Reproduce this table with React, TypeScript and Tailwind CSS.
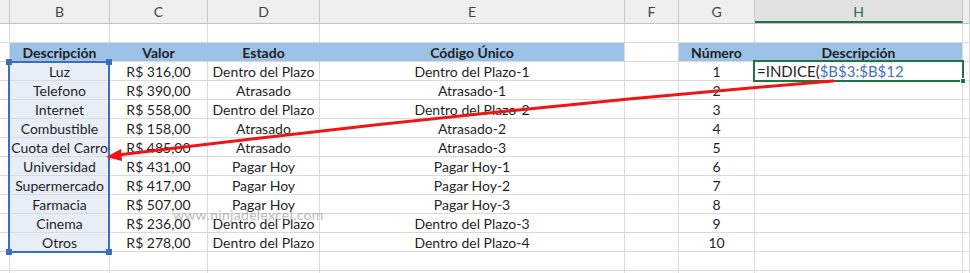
import React from "react";

const colWidths = ["w-[10px]", "w-[100px]", "w-[98px]", "w-[112px]", "w-[305px]", "w-[54px]", "w-[76px]", "w-[208px]", "w-[7px]"];
const letters = ["", "B", "C", "D", "E", "F", "G", "H", ""];

const rows = [
  ["Luz", "R$ 316,00", "Dentro del Plazo", "Dentro del Plazo-1", "1"],
  ["Telefono", "R$ 390,00", "Atrasado", "Atrasado-1", "2"],
  ["Internet", "R$ 558,00", "Dentro del Plazo", "Dentro del Plazo-2", "3"],
  ["Combustible", "R$ 158,00", "Atrasado", "Atrasado-2", "4"],
  ["Cuota del Carro", "R$ 485,00", "Atrasado", "Atrasado-3", "5"],
  ["Universidad", "R$ 431,00", "Pagar Hoy", "Pagar Hoy-1", "6"],
  ["Supermercado", "R$ 417,00", "Pagar Hoy", "Pagar Hoy-2", "7"],
  ["Farmacia", "R$ 507,00", "Pagar Hoy", "Pagar Hoy-3", "8"],
  ["Cinema", "R$ 236,00", "Dentro del Plazo", "Dentro del Plazo-3", "9"],
  ["Otros", "R$ 278,00", "Dentro del Plazo", "Dentro del Plazo-4", "10"],
];

const cell = "h-[19px] shrink-0 border-r border-b border-[#dadada] text-center leading-[19px] whitespace-nowrap";

function Cell({ i, className = "", children }: { i: number; className?: string; children?: React.ReactNode }) {
  return <div className={`${cell} ${colWidths[i]} ${className}`}>{children}</div>;
}

function EmptyRow() {
  return (
    <div className="flex">
      {colWidths.map((_, i) => (
        <Cell key={i} i={i} />
      ))}
    </div>
  );
}

export default function App() {
  return (
    <div className="relative h-[273px] w-[970px] overflow-hidden bg-white text-[14px] text-[#1f1f1f]" style={{ fontFamily: "Lato, 'Open Sans', sans-serif" }}>
      {/* column letters */}
      <div className="flex h-[24px] border-b border-[#c4c4c4] bg-[#efefef]">
        {colWidths.map((w, i) => (
          <div
            key={i}
            className={`${w} shrink-0 border-r border-[#c8c8c8] text-center leading-[23px] ${
              letters[i] === "H" ? "border-b-2 border-b-[#217346] bg-[#e1e1e1] text-[#217346]" : "text-[#444]"
            }`}
          >
            {letters[i]}
          </div>
        ))}
      </div>

      <EmptyRow />

      {/* table headers */}
      <div className="flex font-bold">
        <Cell i={0} />
        <Cell i={1} className="border-r-[#9bc2e6] bg-[#9bc2e6]">Descripción</Cell>
        <Cell i={2} className="border-r-[#9bc2e6] bg-[#9bc2e6]">Valor</Cell>
        <Cell i={3} className="border-r-[#9bc2e6] bg-[#9bc2e6]">Estado</Cell>
        <Cell i={4} className="bg-[#9bc2e6]">Código Único</Cell>
        <Cell i={5} />
        <Cell i={6} className="border-r-[#9bc2e6] bg-[#9bc2e6]">Número</Cell>
        <Cell i={7} className="bg-[#9bc2e6]">Descripción</Cell>
        <Cell i={8} />
      </div>

      {rows.map((r, k) => (
        <div key={k} className="flex">
          <Cell i={0} />
          <Cell i={1} className="bg-[#e8eef8]">{r[0]}</Cell>
          <Cell i={2}>{r[1]}</Cell>
          <Cell i={3}>{r[2]}</Cell>
          <Cell i={4}>{r[3]}</Cell>
          <Cell i={5} />
          <Cell i={6}>{r[4]}</Cell>
          <Cell i={7} className="text-left">
            {k === 0 && (
              <span className="pl-[2px] text-[15px]">
                =INDICE(<span className="text-[#4472c4]">$B$3:$B$12</span>
              </span>
            )}
          </Cell>
          <Cell i={8} />
        </div>
      ))}

      <EmptyRow />
      <EmptyRow />

      {/* range selection B4:B13 */}
      <div className="pointer-events-none absolute left-[8px] top-[61px] h-[192px] w-[102px] border-2 border-[#3c6dc5]">
        <div className="absolute -left-[4px] -top-[4px] h-[6px] w-[6px] bg-[#3c6dc5]" />
        <div className="absolute -right-[4px] -top-[4px] h-[6px] w-[6px] bg-[#3c6dc5]" />
        <div className="absolute -bottom-[4px] -left-[4px] h-[6px] w-[6px] bg-[#3c6dc5]" />
        <div className="absolute -bottom-[4px] -right-[4px] h-[6px] w-[6px] bg-[#3c6dc5]" />
      </div>

      {/* active cell H4 */}
      <div className="pointer-events-none absolute left-[753px] top-[60px] h-[22px] w-[211px] border-2 border-[#217346]">
        <div className="absolute -bottom-[4px] -right-[4px] h-[6px] w-[6px] border border-white bg-[#217346]" />
      </div>

      {/* red arrow */}
      <svg className="pointer-events-none absolute left-0 top-0" width="970" height="273">
        <path d="M833 81 Q472 111 118 155" fill="none" stroke="#f01414" strokeWidth="3" strokeLinecap="round" />
        <path d="M106 157 L121 149 L122 161 Z" fill="#f01414" />
      </svg>

      <span className="pointer-events-none absolute left-[173px] top-[204px] text-[14px] tracking-[0.3px] text-[#8f8f8f] opacity-60">
        www.ninjadelexcel.com
      </span>
    </div>
  );
}
